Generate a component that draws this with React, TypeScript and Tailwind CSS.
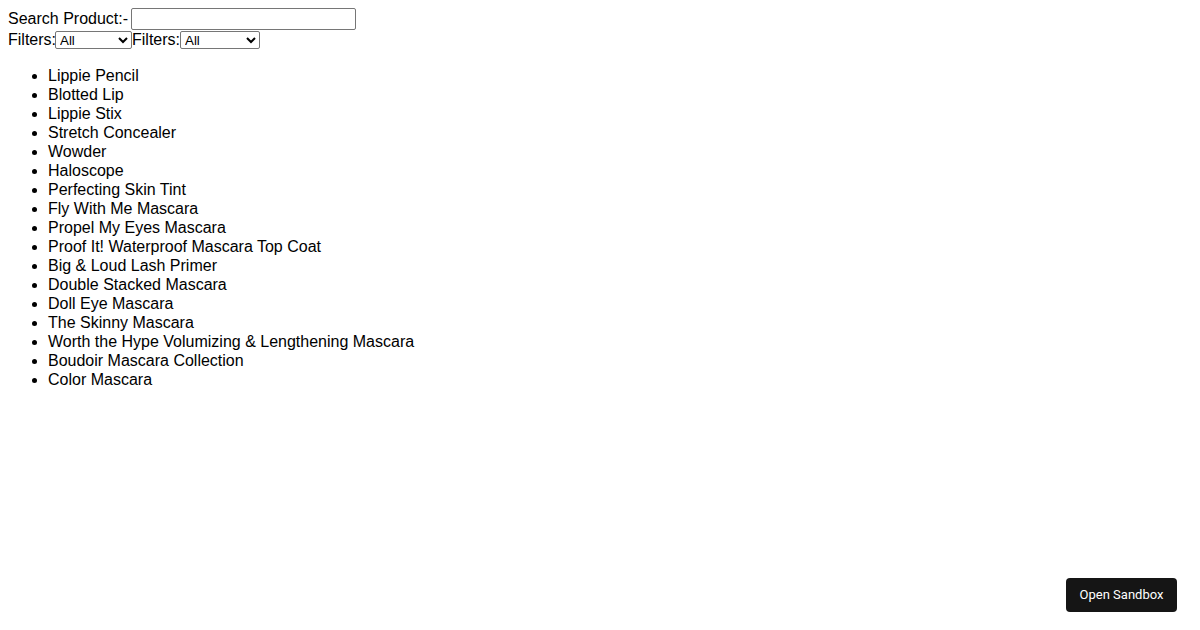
const products = [
  "Lippie Pencil",
  "Blotted Lip",
  "Lippie Stix",
  "Stretch Concealer",
  "Wowder",
  "Haloscope",
  "Perfecting Skin Tint",
  "Fly With Me Mascara",
  "Propel My Eyes Mascara",
  "Proof It! Waterproof Mascara Top Coat",
  "Big & Loud Lash Primer",
  "Double Stacked Mascara",
  "Doll Eye Mascara",
  "The Skinny Mascara",
  "Worth the Hype Volumizing & Lengthening Mascara",
  "Boudoir Mascara Collection",
  "Color Mascara",
];

export default function App() {
  return (
    <div className="min-h-[630px] bg-white font-['Liberation_Sans',Arial,sans-serif] text-base leading-normal text-black">
      <div className="p-2">
        {/* Search */}
        <div className="flex h-[22px] items-center">
          <span>Search Product:-</span>
          <input
            type="text"
            className="ml-[3px] h-[22px] w-[225px] rounded-[2px] border border-[#767676] px-[2px] text-[13.333px]"
          />
        </div>

        {/* Filters */}
        <div className="flex h-[20px] items-center">
          <span>Filters:</span>
          <select className="-ml-px h-[18px] w-[77px] rounded-[2px] border border-[#767676] pl-0 text-[13.333px] leading-none">
            <option>All</option>
          </select>
          <span>Filters:</span>
          <select className="h-[18px] w-[80px] rounded-[2px] border border-[#767676] pl-0 text-[13.333px] leading-none">
            <option>All</option>
          </select>
        </div>

        {/* Product list */}
        <ul className="my-4 list-disc pl-10 leading-[19px]">
          {products.map((p) => (
            <li key={p}>{p}</li>
          ))}
        </ul>
      </div>

      <button className="fixed right-[23px] bottom-[18px] h-[34px] w-[111px] rounded-[4px] bg-[#151515] font-['Roboto',sans-serif] text-[13px] text-white">
        Open Sandbox
      </button>
    </div>
  );
}
